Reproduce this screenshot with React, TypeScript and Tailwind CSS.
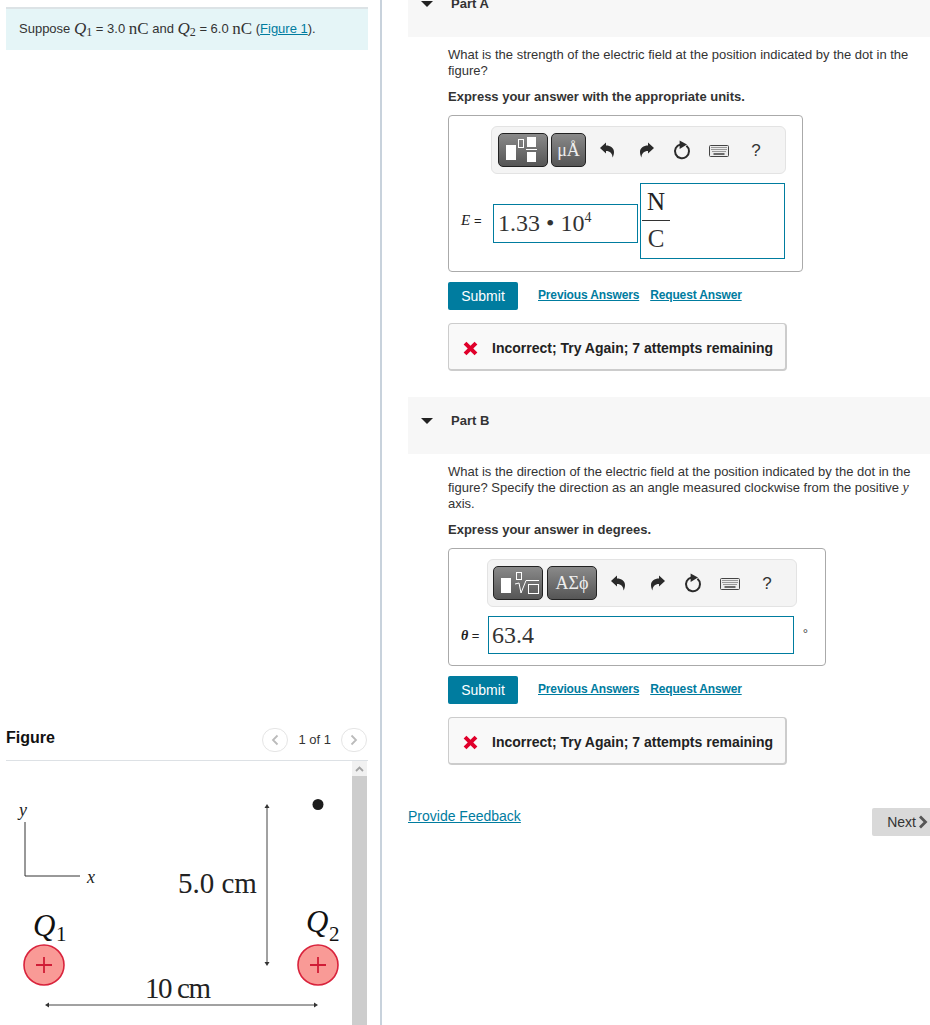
import React from "react";

const serif = "font-['Liberation_Serif',serif]";

function Undo({ flip }: { flip?: boolean }) {
  return (
    <svg width="14" height="16" viewBox="0 0 14 16" className={flip ? "-scale-x-100" : ""}>
      <path d="M0 6 L6 0.5 V3.5 C10.5 3.5 14 6 14 10 C14 12 13.5 13.8 12.5 15.5 C12.5 11.5 10 9 6 9 V11.5 Z" fill="#2a2a2a" />
    </svg>
  );
}

function Reset() {
  return (
    <svg width="18" height="20" viewBox="0 0 18 20" fill="none">
      <path d="M7.5 4.4 A7 7 0 1 0 13.4 5.8" stroke="#2a2a2a" strokeWidth="2" />
      <path d="M6.6 0.4 L14 4.6 L6.6 9 Z" fill="#2a2a2a" />
    </svg>
  );
}

function Kbd() {
  return (
    <svg width="20" height="12" viewBox="0 0 20 12" fill="none">
      <rect x="0.5" y="0.5" width="19" height="11" rx="1" fill="#ececec" stroke="#444" />
      <path d="M2.5 2.5h15M2.5 4.5h15M3.5 6.5h13" stroke="#444" strokeDasharray="1 1" />
      <path d="M4.5 9h11" stroke="#333" strokeWidth="1.4" />
    </svg>
  );
}

function Tools() {
  return (
    <div className="flex items-center w-[161px] ml-[14px]">
      <div className="w-[14px] flex justify-center"><Undo /></div>
      <div className="w-[14px] ml-[26px] flex justify-center"><Undo flip /></div>
      <div className="w-[18px] ml-[19px] flex justify-center -mt-[1px]"><Reset /></div>
      <div className="w-[20px] ml-[18px] flex justify-center mt-[2px]"><Kbd /></div>
      <div className="w-[10px] ml-[22px] text-[17px] text-[#333] leading-none text-center">?</div>
    </div>
  );
}

const btn =
  "h-[34px] rounded-[5px] border border-[#222] bg-linear-to-b from-[#8a8a8a] to-[#565656] flex items-center justify-center";

function Incorrect() {
  return (
    <div className="mt-[13px] w-[339px] h-[48px] rounded-[4px] border border-[#ccc] border-b-2 border-r-2 bg-[#f9f9f9] flex items-center pl-[14px] gap-[14px] pt-[3px]">
      <svg width="15" height="15" viewBox="0 0 14 14">
        <path d="M0.6 3.2 L3.2 0.6 L7 4.4 L10.8 0.6 L13.4 3.2 L9.6 7 L13.4 10.8 L10.8 13.4 L7 9.6 L3.2 13.4 L0.6 10.8 L4.4 7 Z" fill="#e0002b" />
      </svg>
      <span className="font-bold text-[14px] text-[#222]">Incorrect; Try Again; 7 attempts remaining</span>
    </div>
  );
}

function Actions() {
  return (
    <div className="flex items-center mt-[10px]">
      <div className="w-[70px] h-[28px] bg-[#007c9f] rounded-[2px] text-white text-[14px] flex items-center justify-center">Submit</div>
      <a className="ml-[20px] -mt-[2px] text-[12px] tracking-[-0.15px] font-bold text-[#007c9f] underline">Previous Answers</a>
      <a className="ml-[11px] -mt-[2px] text-[12px] tracking-[-0.15px] font-bold text-[#007c9f] underline">Request Answer</a>
    </div>
  );
}

function PartHead({ name }: { name: string }) {
  return (
    <div className="h-[57px] bg-[#f7f7f7] flex items-center pl-[13px] pb-[10px]">
      <div className="w-0 h-0 border-l-[6px] border-r-[6px] border-t-[6px] border-l-transparent border-r-transparent border-t-[#222]" />
      <span className="ml-[18px] font-bold text-[13px] text-[#333]">{name}</span>
    </div>
  );
}

function Figure() {
  const s = { fontFamily: "'Liberation Serif', serif" };
  return (
    <svg width="346" height="264" viewBox="6 761 346 264" style={s}>
      <path d="M25 822 V876 H80" fill="none" stroke="#333" strokeWidth="1" />
      <text x="19" y="816" fontSize="18" fontStyle="italic" fill="#222">y</text>
      <text x="87" y="883" fontSize="18" fontStyle="italic" fill="#222">x</text>
      <circle cx="318" cy="804.5" r="5.5" fill="#1d1d1d" />
      <path d="M267 806 V962" stroke="#444" strokeWidth="1" />
      <path d="M267 804 L264.5 808 H269.5 Z M267 966 L264.5 962 H269.5 Z" fill="#333" />
      <text x="178" y="893" fontSize="29" fill="#222">5.0 cm</text>
      <text x="33" y="936" fontSize="31" fontStyle="italic" fill="#111">Q</text>
      <text x="56" y="941" fontSize="21" fill="#111">1</text>
      <text x="306" y="932" fontSize="31" fontStyle="italic" fill="#111">Q</text>
      <text x="329" y="941" fontSize="21" fill="#111">2</text>
      {[44, 318].map((x) => (
        <g key={x}>
          <circle cx={x} cy="965" r="20" fill="#f99a96" stroke="#d9233c" strokeWidth="1.6" />
          <path d={`M${x - 8} 965 H${x + 8} M${x} 957 V973`} stroke="#d01c36" strokeWidth="1.8" />
        </g>
      ))}
      <text x="145" y="998" fontSize="29" letterSpacing="-1.4" fill="#222">10 cm</text>
      <path d="M47 1005 H316" stroke="#444" strokeWidth="1" />
      <path d="M45 1005 L49 1002.5 V1007.5 Z M318 1005 L314 1002.5 V1007.5 Z" fill="#333" />
    </svg>
  );
}

export default function App() {
  return (
    <div className="h-[1025px] w-[930px] overflow-hidden flex bg-white font-['Liberation_Sans',Arial,sans-serif] text-[#333]">
      {/* Left */}
      <div className="w-[382px] shrink-0 border-r-2 border-[#c8d2dc] pl-[6px] pr-[12px] pt-[7px]">
        <div className="h-[43px] border-t-2 border-[#dce3e6] bg-[#e5f5f7] pl-[13px] pb-[3px] flex items-center text-[13px] leading-none text-[#333]">
          <span>Suppose&nbsp;</span>
          <span className={`${serif} italic text-[17px]`}>Q</span>
          <span className={`${serif} text-[12px] self-end mb-[9px]`}>1</span>
          <span>&nbsp;= 3.0&nbsp;</span>
          <span className={`${serif} text-[17px]`}>nC</span>
          <span>&nbsp;and&nbsp;</span>
          <span className={`${serif} italic text-[17px]`}>Q</span>
          <span className={`${serif} text-[12px] self-end mb-[9px]`}>2</span>
          <span>&nbsp;= 6.0&nbsp;</span>
          <span className={`${serif} text-[17px]`}>nC</span>
          <span>&nbsp;(</span>
          <a className="text-[#007c9f] underline">Figure 1</a>
          <span>).</span>
        </div>
        <div className="mt-[668px] h-[43px] border-b border-[#dde1e5] flex items-start justify-between">
          <span className="font-bold text-[16px] text-[#111] leading-[22px] mt-[9px]">Figure</span>
          <div className="flex items-center mt-[10px] mr-[1px]">
            <div className="w-[26px] h-[24px] rounded-full border border-[#e5e5e5] flex items-center justify-center">
              <svg width="8" height="12" viewBox="0 0 8 12" fill="none"><path d="M6.5 1.5 L2 6 L6.5 10.5" stroke="#bbb" strokeWidth="1.8" /></svg>
            </div>
            <span className="mx-[10px] text-[13px] text-[#333]">1 of 1</span>
            <div className="w-[26px] h-[24px] rounded-full border border-[#e5e5e5] flex items-center justify-center">
              <svg width="8" height="12" viewBox="0 0 8 12" fill="none"><path d="M1.5 1.5 L6 6 L1.5 10.5" stroke="#bbb" strokeWidth="1.8" /></svg>
            </div>
          </div>
        </div>
        <div className="flex">
          <Figure />
          <div className="w-[15px] h-[264px] bg-[#cdcdcd]">
            <div className="h-[15px] bg-[#f1f1f1] flex items-center justify-center">
              <svg width="9" height="6" viewBox="0 0 9 6" fill="none"><path d="M1 5 L4.5 1.5 L8 5" stroke="#a3a3a3" strokeWidth="1.8" /></svg>
            </div>
          </div>
        </div>
      </div>

      {/* Right */}
      <div className="flex-1 pl-[26px] -mt-[20px] min-w-0">
        <PartHead name="Part A" />
        <div className="pl-[40px] pr-[18px]">
          <p className="mt-[10px] text-[13px] leading-[16px]">What is the strength of the electric field at the position indicated by the dot in the figure?</p>
          <p className="mt-[10px] font-bold text-[13px] leading-[16px]">Express your answer with the appropriate units.</p>
          <div className="mt-[10px] w-[355px] h-[157px] rounded-[4px] border border-[#aaa] pt-[10px]">
            <div className="ml-[42px] w-[295px] h-[48px] rounded-[6px] border border-[#e3e3e3] bg-[#f4f4f4] flex items-center pl-[6px]">
              <div className={`${btn} w-[50px]`}>
                <svg width="48" height="32" viewBox="0 0 48 32" fill="none">
                  <rect x="7" y="11" width="10" height="15" fill="#fff" />
                  <rect x="19.5" y="5.5" width="5" height="8" stroke="#fff" />
                  <rect x="28" y="3" width="9" height="10" fill="#fff" />
                  <rect x="27" y="15" width="11" height="1" fill="#fff" />
                  <rect x="28" y="18" width="9" height="10" fill="#fff" />
                </svg>
              </div>
              <div className={`${btn} w-[35px] ml-[3px] ${serif} text-[#eee] text-[18px]`}>μÅ</div>
              <Tools />
            </div>
            <div className="flex mt-[9px] ml-[12px]">
              <div className={`${serif} text-[15px] mt-[26px] w-[32px] text-[#222]`}>
                <span className="italic">E</span> <span className="font-['Liberation_Sans',sans-serif] text-[13px]">=</span>
              </div>
              <div className={`${serif} mt-[21px] w-[145px] h-[39px] border border-[#007c9f] text-[24px] text-[#333] pl-[4px] leading-[37px]`}>
                1.33 • 10<sup className="text-[14px] -top-[9px]">4</sup>
              </div>
              <div className="w-[145px] h-[76px] ml-[2px] border border-[#007c9f] pl-[1px]">
                <div className={`${serif} w-[28px] text-[25px] leading-[36px] text-center border-b border-[#333] h-[37px] text-[#222]`}>N</div>
                <div className={`${serif} w-[28px] text-[25px] leading-[36px] text-center text-[#333]`}>C</div>
              </div>
            </div>
          </div>
          <Actions />
          <Incorrect />
        </div>

        <div className="mt-[26px]"><PartHead name="Part B" /></div>
        <div className="pl-[40px] pr-[18px]">
          <p className="mt-[10px] text-[13px] leading-[16px]">
            What is the direction of the electric field at the position indicated by the dot in the figure? Specify the direction as an angle measured clockwise from the positive <span className={`${serif} italic text-[14px] leading-[16px]`}>y</span> axis.
          </p>
          <p className="mt-[10px] font-bold text-[13px] leading-[16px]">Express your answer in degrees.</p>
          <div className="mt-[10px] w-[378px] h-[118px] rounded-[4px] border border-[#aaa] pt-[10px]">
            <div className="ml-[38px] w-[310px] h-[48px] rounded-[6px] border border-[#e3e3e3] bg-[#f4f4f4] flex items-center pl-[5px]">
              <div className={`${btn} w-[50px]`}>
                <svg width="48" height="32" viewBox="0 0 48 32" fill="none">
                  <rect x="7" y="11" width="10" height="15" fill="#fff" />
                  <rect x="22.5" y="5.5" width="5" height="7" stroke="#fff" />
                  <path d="M21 17 L25 16 L27 26 L32 13.5 H45" stroke="#fff" />
                  <rect x="34.5" y="17.5" width="10" height="9" stroke="#fff" />
                </svg>
              </div>
              <div className={`${btn} w-[50px] ml-[4px] ${serif} text-[#eee] text-[18px]`}>ΑΣϕ</div>
              <Tools />
            </div>
            <div className="flex mt-[9px] ml-[12px] items-center">
              <div className={`${serif} text-[14px] w-[27px] text-[#222]`}>
                <span className="italic font-bold">θ</span> <span className="font-['Liberation_Sans',sans-serif] text-[13px]">=</span>
              </div>
              <div className={`${serif} w-[306px] h-[38px] border border-[#007c9f] text-[24px] text-[#333] pl-[3px] leading-[36px]`}>63.4</div>
              <div className={`${serif} ml-[9px] text-[12px] text-[#333] -mt-[4px]`}>°</div>
            </div>
          </div>
          <Actions />
          <Incorrect />
        </div>

        <div className="mt-[37px] flex items-start justify-between">
          <a className="text-[14px] text-[#007c9f] underline mt-[6px] leading-[16px]">Provide Feedback</a>
          <div className="mt-[6px] w-[58px] h-[28px] bg-[#d9d9d9] rounded-l-[2px] flex items-center justify-end pr-[2px] gap-[2px] text-[14px] text-[#333]">
            <span>Next</span>
            <svg width="10" height="14" viewBox="0 0 10 14" fill="none"><path d="M2 1.5 L7.5 7 L2 12.5" stroke="#555" strokeWidth="2.8" /></svg>
          </div>
        </div>
      </div>
    </div>
  );
}
